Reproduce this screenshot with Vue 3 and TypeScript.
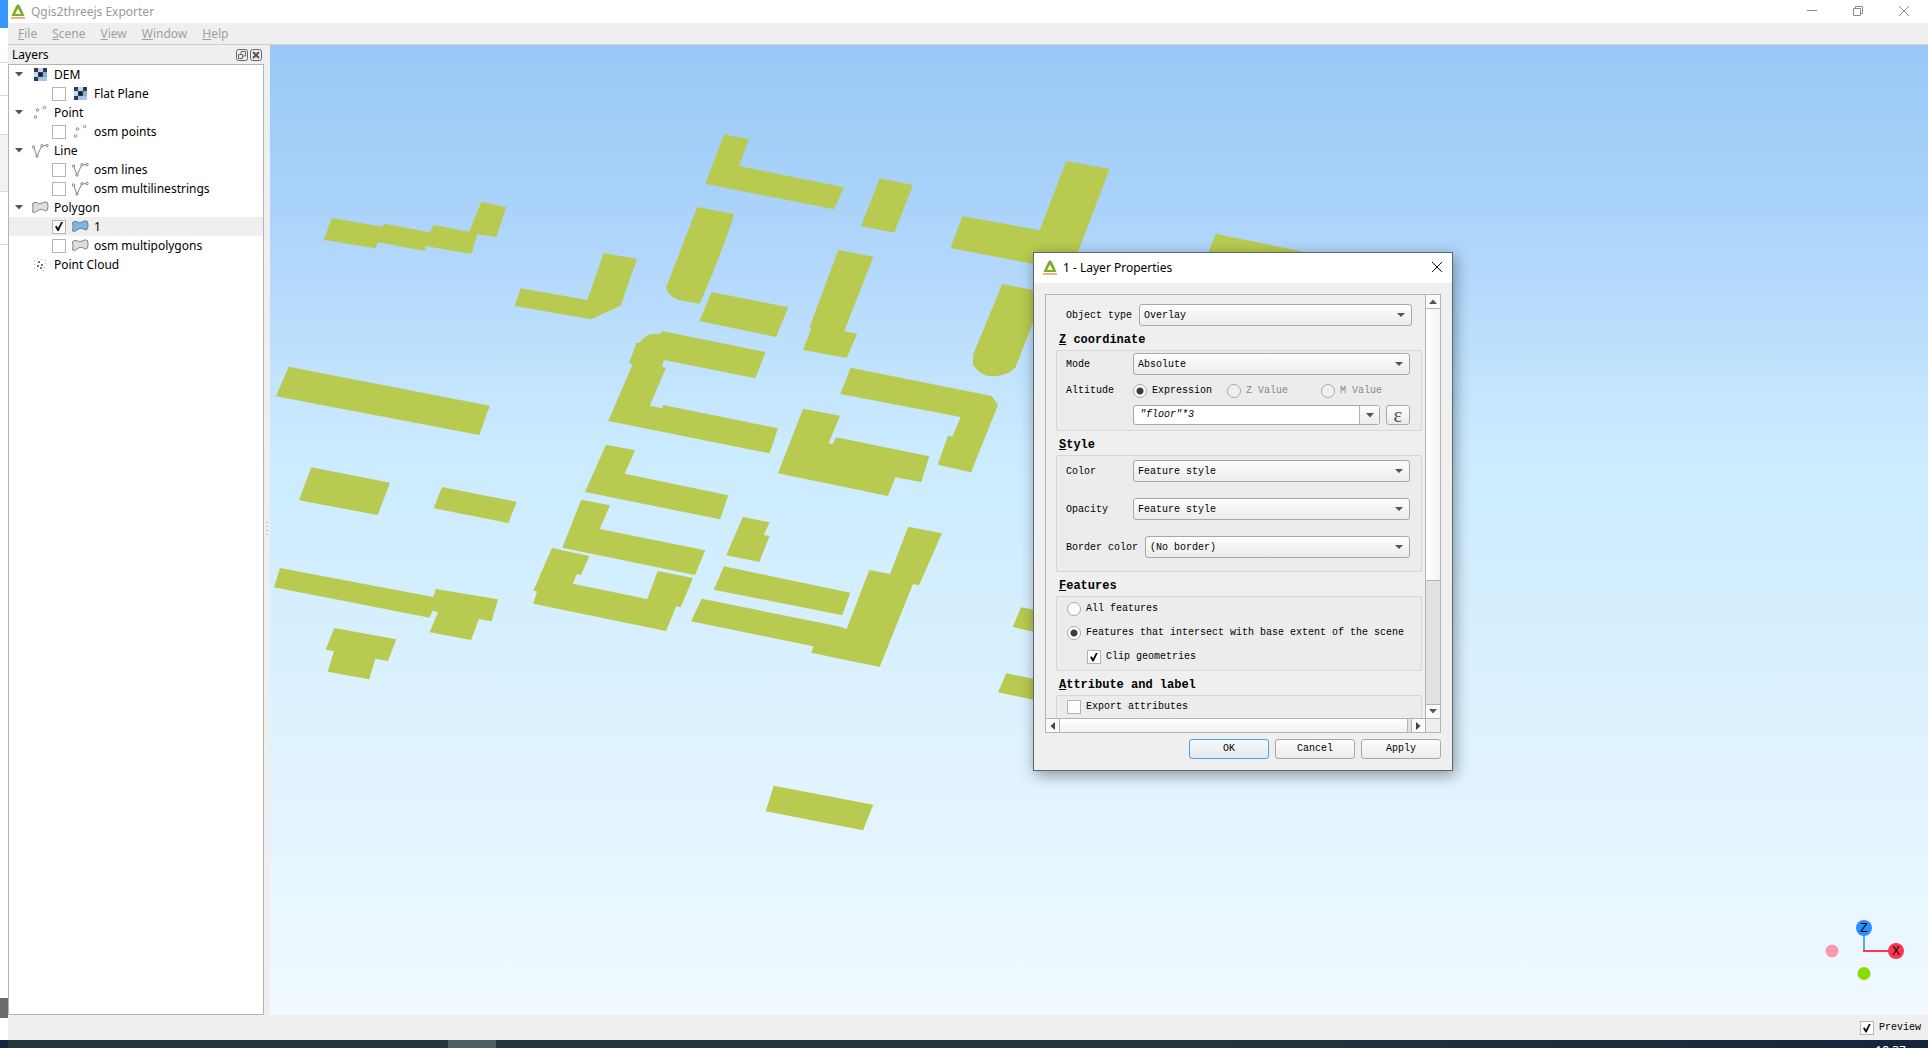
<script setup lang="ts">
import { ref } from 'vue'

type IconKind = 'dem' | 'point' | 'line' | 'polygon' | 'cloud'

interface LayerRow {
  id: string
  label: string
  icon: IconKind
  group: boolean
  expandable?: boolean
  checked?: boolean
  active?: boolean
}

const menus: string[] = ['File', 'Scene', 'View', 'Window', 'Help']

const layers = ref<LayerRow[]>([
  { id: 'dem', label: 'DEM', icon: 'dem', group: true, expandable: true },
  { id: 'flat', label: 'Flat Plane', icon: 'dem', group: false },
  { id: 'point', label: 'Point', icon: 'point', group: true, expandable: true },
  { id: 'osm-points', label: 'osm points', icon: 'point', group: false },
  { id: 'line', label: 'Line', icon: 'line', group: true, expandable: true },
  { id: 'osm-lines', label: 'osm lines', icon: 'line', group: false },
  { id: 'osm-mls', label: 'osm multilinestrings', icon: 'line', group: false },
  { id: 'polygon', label: 'Polygon', icon: 'polygon', group: true, expandable: true },
  { id: 'one', label: '1', icon: 'polygon', group: false, checked: true, active: true },
  { id: 'osm-mp', label: 'osm multipolygons', icon: 'polygon', group: false },
  { id: 'cloud', label: 'Point Cloud', icon: 'cloud', group: true },
])

// Building footprints of the active layer, in scene units
const footprints: string[] = [
  '332,218 382.3,226.7 384.3,223.7 429.7,232.3 433.7,225 469,231.7 481.3,202 506.3,207 496.3,237 477.3,234.3 471.3,254 425.7,246 425.3,251 377.7,242.3 375.7,248.3 323.7,239.7',
  '520.7,288.3 587.3,300 603.7,253 637,259 620.7,305.7 591,319.3 514.7,306',
  '288.7,366.7 489.7,405.7 479.3,435 276,396.3',
  '724,134.3 749,139.3 739,166 844.3,187.3 834,209.3 705.3,183.7',
  '879.7,178.3 913,185 894.3,232.7 861,226',
  '697.3,207 734.3,214 727.3,235 712.7,273.3 699.7,303.7 678.3,300 672.3,296.7 668,292.7 666,287.7',
  '711.7,292 788.3,307.3 776,337 699.3,321',
  '838.3,250 873.3,256.7 844.3,331 857,333.7 846.7,358 803,350 811.3,328.3 809.3,327.7',
  '850.7,367.7 991.7,396 998,405 971,472.3 937.7,464.7 948,435.7 952.3,436.7 960.7,417 840.3,394',
  '1002.3,284 1044,292 1034,320 1015.3,367.7 1008.7,372.7 1001.7,375.3 994,376.3 986.7,375.7 981,373.3 976.7,369.3 973,365.3 973,354.7',
  '962.3,216 1039.7,230.3 1066.3,161 1109.7,169 1077.7,252.7 1071,271 1033.3,264 950.7,248',
  '1215.7,233.7 1300.7,251.3 1299,256 1207,256',
  '662,331 765.7,352 755.3,378.3 664,360 662,366.7 666,367.7 649.7,405.7 662,408.3 663.3,405 778,428.3 769.7,453.3 608.3,421 632.7,364.3 629,363 636.7,342.7 639.3,343 643.3,338.3 648.3,335 653.3,333.7 660,334.3',
  '803,408.7 840,415.7 828.7,443.3 832.7,444.3 836,437.3 929.3,456.3 921.3,482 895.3,477.3 888,496 778,473.3',
  '606,444.7 635,450.3 624.7,473.7 728.3,495.3 720,519.3 585,492',
  '581.3,499.7 610,505.3 599.7,529 705.3,550.3 695,575 562.3,547.7',
  '552,548 589.3,556 581,575 576.7,574.3 572.7,583.7 647.3,599 657.7,571 693,578 680.7,607.3 676.3,606.3 666,631 533.3,603.7 537,591.3 533.3,590.7',
  '742.7,517 769.7,522.3 763.7,535 769.7,536 759.3,562 726.3,555.3',
  '724,566.3 850.3,592.7 842.3,615.3 713.7,589.7',
  '701.7,598.7 838.3,626.3 846.7,629 869.3,570 890,574 908.3,526.7 942,533.3 919,585.3 913,584 879.7,667 811.3,652.7 813.3,646.3 691,621.3',
  '311.3,467.3 390,482.7 377.7,515 299,500.3',
  '442,487 516.7,501.7 508.3,523 433.7,508.3',
  '280,568 433.3,597 435.7,589 498,599.3 491.7,621.3 479,619 471,640 429.7,632.3 438,612 432.3,611 429.7,617.7 274,587.3',
  '334.3,628 396.3,639.3 388,661 375.3,658.7 369.3,679.3 327.7,671.7 334,651.3 325.7,649.7',
  '773.7,785.7 873.3,804.7 863,830.3 765.7,811.3',
  '1021,607.3 1044,612 1044,634 1012.7,627',
  '1006.3,673.3 1044,681 1044,702 998,692.3',
]

const altitude = ref('expression')
const scope = ref('intersect')
const expression = ref('"floor"*3')
const clip = ref(true)
const exportAttributes = ref(false)
const preview = ref(true)
</script>

<template>
  <div class="desktop">
    <div class="body">
      <div class="behind">
        <i class="b-blue"></i><i class="b-cell"></i><i class="b-cell two"></i><i class="b-cell three"></i>
        <i class="b-cell shade"></i><i class="b-cell five"></i><i class="b-fill"></i><i class="b-dark"></i><i class="b-end"></i>
      </div>
      <div class="window">
        <header class="titlebar">
          <svg class="logo" width="14" height="15" viewBox="0 0 14 15">
            <path d="M7 0 9 2 13.500 12H.5L5 2Z" fill="#7fae26" />
            <path d="M7 4.500 9.800 10H4.200Z" fill="#fff" />
            <path d="M0 13h14v1.800H0z" fill="#f5a673" />
          </svg>
          <h1>Qgis2threejs Exporter</h1>
          <div class="winbtns">
            <button aria-label="Minimize"><svg width="12" height="12"><path d="M1 5.500h10" stroke="#8c8c8c" /></svg></button>
            <button aria-label="Restore"><svg width="12" height="12"><path d="M1.500 3.500h7v7h-7zM3.500 3.500v-2h7v7h-2" fill="none" stroke="#8c8c8c" /></svg></button>
            <button aria-label="Close"><svg width="12" height="12"><path d="M1 1l10 10M11 1 1 11" stroke="#8c8c8c" /></svg></button>
          </div>
        </header>
        <nav class="menubar">
          <button v-for="m in menus" :key="m"><u>{{ m[0] }}</u>{{ m.slice(1) }}</button>
        </nav>
        <div class="main">
          <aside class="dock">
            <div class="dock-head">
              <h2>Layers</h2>
              <button aria-label="Float"><svg width="12" height="12"><rect x=".5" y=".5" width="11" height="11" rx="2" fill="none" stroke="#666" /><path d="M2.500 5.500h4v4h-4zM5 5V2.500h4.500V7H7" fill="none" stroke="#666" /></svg></button>
              <button aria-label="Close panel"><svg width="12" height="12"><rect x=".5" y=".5" width="11" height="11" rx="2" fill="none" stroke="#666" /><path d="M3 3l6 6M9 3 3 9" stroke="#555" stroke-width="2" /></svg></button>
            </div>
            <ul class="tree">
              <li v-for="l in layers" :key="l.id" :class="{ child: !l.group, active: l.active }">
                <span class="twist"><svg v-if="l.expandable" width="8" height="5"><path d="M0 0h8L4 4.500z" fill="#555" /></svg></span>
                <input v-if="!l.group" :id="l.id" v-model="l.checked" type="checkbox" class="tick" />
                <svg class="ico" width="18" height="14" viewBox="0 0 18 14">
                  <g v-if="l.icon === 'dem'">
                    <path d="M3 0h13v13H3z" fill="#a9c3e6" />
                    <path d="M3 0h4v4H3zM12 0h4v4h-4zM3 9h4v4H3zM7 4h5v5H7z" fill="#2c3e57" />
                    <path d="M8 5h3v3H8z" fill="#16202e" />
                    <path d="M7 0h5v4H7zM3 4h4v5H3z" fill="#c6d8f0" />
                    <path d="M12 4h4v5h-4z" fill="#8fabd2" />
                  </g>
                  <g v-else-if="l.icon === 'point'" fill="#fff" stroke="#8c8c8c">
                    <circle cx="4.500" cy="11" r="1.300" /><circle cx="6.500" cy="4" r="1.300" /><circle cx="13.500" cy="1.500" r="1.300" />
                  </g>
                  <g v-else-if="l.icon === 'line'" fill="#fff" stroke="#858585">
                    <path d="M2.500 3 6 12 10.500 2.500Q11 1.500 16 1.500" fill="none" />
                    <circle cx="2.500" cy="3" r="1.200" /><circle cx="6" cy="12" r="1.200" /><circle cx="11" cy="1.800" r="1.200" /><circle cx="16" cy="1.500" r="1.200" />
                  </g>
                  <path
                    v-else-if="l.icon === 'polygon'"
                    d="M1.500 2.500Q4 .3 6.500 2T11 2Q14 0 16.500 1.500 17.500 5 16.500 9 14 11 12.500 9 9 7 6 10 3.500 12.500 1.500 11 2.500 7 1.500 2.500Z"
                    :fill="l.active ? '#86b3d9' : '#dedede'"
                    :stroke="l.active ? '#5a86ad' : '#858585'"
                  />
                  <g v-else fill="#777">
                    <path d="M7 3h2v2H7zM10 6h2v2h-2zM6 7h2v2H6zM9 9h2v2H9z" />
                    <path d="M3 2h1v1H3zM10 1h1v1h-1zM14 2h1v1h-1zM3 6h1v1H3zM14 5h1v1h-1zM13 9h1v1h-1zM3 10h1v1H3zM6 12h1v1H6zM12 12h1v1h-1zM6 0h1v1H6z" fill="#aaa" />
                  </g>
                </svg>
                <label v-if="!l.group" :for="l.id">{{ l.label }}</label>
                <span v-else>{{ l.label }}</span>
              </li>
            </ul>
          </aside>
          <div class="splitter"><i></i></div>
          <section class="scene">
            <svg class="buildings" viewBox="270 45 1658 970" preserveAspectRatio="xMinYMin slice">
              <polygon v-for="(p, i) in footprints" :key="i" :points="p" fill="#b9ca50" />
            </svg>
            <svg class="gizmo" width="88" height="70" viewBox="0 0 88 70">
              <path d="M44 12v23" stroke="#5aa5f7" stroke-width="2" />
              <path d="M43 35h33" stroke="#ff3653" stroke-width="2" />
              <circle cx="12" cy="35" r="6.500" fill="#f79aac" />
              <circle cx="44" cy="57.500" r="6.500" fill="#8adb00" />
              <circle cx="44" cy="12" r="8" fill="#2c8fff" />
              <circle cx="76" cy="35" r="8" fill="#ff3653" />
              <text x="44" y="16" text-anchor="middle">Z</text>
              <text x="76" y="39" text-anchor="middle">X</text>
            </svg>

            <form class="dialog" @submit.prevent>
              <header class="dlg-title">
                <svg class="logo" width="14" height="15" viewBox="0 0 14 15">
                  <path d="M7 0 9 2 13.500 12H.5L5 2Z" fill="#7fae26" />
                  <path d="M7 4.500 9.800 10H4.200Z" fill="#fff" />
                  <path d="M0 13h14v1.800H0z" fill="#f5a673" />
                </svg>
                <h2>1 - Layer Properties</h2>
                <button type="button" aria-label="Close dialog"><svg width="12" height="12"><path d="M1 1l10 10M11 1 1 11" stroke="#111" /></svg></button>
              </header>
              <div class="scroll">
                <div class="content">
                  <div class="row top">
                    <label for="otype">Object type</label>
                    <span class="combo"><select id="otype"><option>Overlay</option></select></span>
                  </div>
                  <h3><u>Z</u> coordinate</h3>
                  <fieldset class="zbox">
                    <div class="row">
                      <label for="mode" class="lab">Mode</label>
                      <span class="combo"><select id="mode"><option>Absolute</option></select></span>
                    </div>
                    <div class="row alt">
                      <span class="lab">Altitude</span>
                      <label class="opt wide"><input v-model="altitude" type="radio" value="expression" />Expression</label>
                      <label class="opt wide off"><input v-model="altitude" type="radio" value="z" disabled />Z Value</label>
                      <label class="opt off"><input v-model="altitude" type="radio" value="m" disabled />M Value</label>
                    </div>
                    <div class="row">
                      <span class="lab"></span>
                      <span class="editable">
                        <input v-model="expression" type="text" aria-label="Altitude expression" />
                        <button type="button" aria-label="Recent expressions"><svg width="8" height="5"><path d="M0 0h8L4 4.500z" fill="#555" /></svg></button>
                      </span>
                      <button type="button" class="eps" aria-label="Expression dialog">ε</button>
                    </div>
                  </fieldset>
                  <h3><u>S</u>tyle</h3>
                  <fieldset class="sbox">
                    <div class="row">
                      <label for="color" class="lab">Color</label>
                      <span class="combo"><select id="color"><option>Feature style</option></select></span>
                    </div>
                    <div class="row">
                      <label for="opacity" class="lab">Opacity</label>
                      <span class="combo"><select id="opacity"><option>Feature style</option></select></span>
                    </div>
                    <div class="row">
                      <label for="border" class="lab long">Border color</label>
                      <span class="combo"><select id="border"><option>(No border)</option></select></span>
                    </div>
                  </fieldset>
                  <h3><u>F</u>eatures</h3>
                  <fieldset class="fbox">
                    <label class="opt"><input v-model="scope" type="radio" value="all" />All features</label>
                    <label class="opt"><input v-model="scope" type="radio" value="intersect" />Features that intersect with base extent of the scene</label>
                    <label class="opt sub"><input v-model="clip" type="checkbox" class="tick" />Clip geometries</label>
                  </fieldset>
                  <h3><u>A</u>ttribute and label</h3>
                  <fieldset class="abox">
                    <label class="opt box"><input v-model="exportAttributes" type="checkbox" class="tick" />Export attributes</label>
                  </fieldset>
                </div>
                <div class="vbar">
                  <button type="button" aria-label="Scroll up"><svg width="8" height="5"><path d="M0 5h8L4 .5z" fill="#555" /></svg></button>
                  <i class="thumb"></i><i class="track"></i>
                  <button type="button" aria-label="Scroll down"><svg width="8" height="5"><path d="M0 0h8L4 4.500z" fill="#555" /></svg></button>
                </div>
                <div class="hbar">
                  <button type="button" aria-label="Scroll left"><svg width="5" height="8"><path d="M5 0v8L.5 4z" fill="#444" /></svg></button>
                  <i class="thumb"></i><i class="track"></i>
                  <button type="button" aria-label="Scroll right"><svg width="5" height="8"><path d="M0 0v8l4.500-4z" fill="#444" /></svg></button>
                </div>
                <div class="corner"></div>
              </div>
              <footer class="actions">
                <button type="submit" class="default">OK</button>
                <button type="button">Cancel</button>
                <button type="button">Apply</button>
              </footer>
            </form>
          </section>
        </div>
        <footer class="statusbar">
          <label class="opt"><input v-model="preview" type="checkbox" class="tick" />Preview</label>
        </footer>
      </div>
    </div>
    <div class="taskbar">
      <i class="start"></i><i class="task"></i>
      <time>18:37</time>
    </div>
  </div>
</template>

<style>
body {
  margin: 0;
  overflow: hidden;
}
</style>

<style scoped>
* {
  box-sizing: border-box;
}
.desktop {
  display: flex;
  flex-direction: column;
  height: 100vh;
  font: 12px/19px "Noto Sans", "Open Sans", sans-serif;
  color: #000;
}
h1, h2, h3, ul, fieldset {
  margin: 0;
  padding: 0;
  font-size: inherit;
  font-weight: normal;
}
button {
  padding: 0;
  border: 0;
  background: none;
  font: inherit;
  color: inherit;
}
svg {
  display: block;
  flex: none;
}
.body {
  flex: 1;
  min-height: 0;
  display: flex;
}
.behind {
  width: 8px;
  display: flex;
  flex-direction: column;
  background: #fff;
}
.b-blue { height: 28px; background: #3897ff; }
.b-cell { height: 35px; border-bottom: 1px solid #dcdcdc; }
.b-cell.two { height: 33px; }
.b-cell.three { height: 39px; }
.b-cell.shade { height: 57px; background: #f2f2f2; }
.b-cell.five { height: 53px; }
.b-fill { flex: 1; }
.b-dark { height: 20px; background: #6b6b6b; }
.b-end { height: 22px; }
.window {
  flex: 1;
  min-width: 0;
  display: flex;
  flex-direction: column;
  background: #efefef;
}
.titlebar {
  height: 23px;
  display: flex;
  align-items: center;
  padding-left: 3px;
  background: #fff;
  color: #999;
}
.titlebar h1 {
  flex: 1;
  margin-left: 6px;
}
.winbtns {
  display: flex;
  padding: 0 1px 2px 0;
}
.winbtns button {
  width: 46px;
  display: grid;
  place-items: center;
}
.menubar {
  height: 22px;
  display: flex;
  align-items: center;
  gap: 15px;
  padding-left: 10px;
  border-bottom: 1px solid #d0d0d0;
  color: #a0a0a0;
}
.main {
  flex: 1;
  min-height: 0;
  display: flex;
}
.dock {
  width: 256px;
  display: flex;
  flex-direction: column;
}
.dock-head {
  height: 19px;
  display: flex;
  align-items: center;
  gap: 2px;
  padding: 0 2px 0 4px;
}
.dock-head h2 {
  flex: 1;
}
.tree {
  flex: 1;
  border: 1px solid #b4b4b4;
  background: #fff;
  list-style: none;
}
.tree li {
  height: 19px;
  display: flex;
  align-items: center;
}
.tree li.active {
  background: #efefef;
}
.twist {
  width: 22px;
  padding-left: 6px;
}
.child .twist {
  width: 43px;
}
.child .ico {
  margin-left: 5px;
}
.ico {
  margin-right: 5px;
}
.tick {
  appearance: none;
  width: 14px;
  height: 14px;
  margin: 0;
  flex: none;
  display: grid;
  place-items: center;
  border: 1px solid #b4b4b4;
  background: #fff;
}
.tick:checked::after {
  content: "";
  width: 8px;
  height: 9px;
  background: #111;
  clip-path: polygon(0 50%, 20% 42%, 38% 66%, 76% 0, 100% 0, 46% 100%, 30% 100%);
}
.splitter {
  width: 6px;
  display: grid;
  place-items: center;
}
.splitter i {
  width: 2px;
  height: 16px;
  background: repeating-linear-gradient(#bbb 0 1px, transparent 1px 4px);
}
.scene {
  position: relative;
  flex: 1;
  min-width: 0;
  background: linear-gradient(#98c8f6, #b0d6fb 21%, #cbebff 42%, #f0f9ff);
}
.buildings {
  width: 100%;
  height: 100%;
}
.gizmo {
  position: absolute;
  right: 20px;
  bottom: 29px;
  font: 12px "Liberation Sans", sans-serif;
}
.statusbar {
  height: 25px;
  display: flex;
  align-items: center;
  justify-content: flex-end;
  padding: 0 7px 0 0;
  font: 10px/14px "Liberation Mono", monospace;
}
.taskbar {
  height: 8px;
  display: flex;
  overflow: hidden;
  background: linear-gradient(90deg, #22383e 60%, #16243c);
}
.start {
  width: 8px;
  background: #18243f;
}
.task {
  width: 48px;
  margin-left: 440px;
  background: #4b5f65;
}
.taskbar time {
  margin: 3px 22px 0 auto;
  color: #fff;
  line-height: 16px;
}

/* Properties dialog */
.dialog {
  position: absolute;
  left: 763px;
  top: 207px;
  width: 420px;
  display: flex;
  flex-direction: column;
  border: 1px solid #5c666e;
  background: #efefef;
  box-shadow: 2px 4px 14px rgba(0, 0, 0, 0.4);
  font: 10px/14px "Liberation Mono", monospace;
}
.dlg-title {
  height: 30px;
  display: flex;
  align-items: center;
  padding: 0 9px 2px;
  background: #fff;
  font: 12px/19px "Noto Sans", "Open Sans", sans-serif;
}
.dlg-title h2 {
  flex: 1;
  margin-left: 6px;
}
.scroll {
  margin: 11px 11px 0;
  height: 439px;
  display: grid;
  grid-template: minmax(0, 1fr) 14px / minmax(0, 1fr) 15px;
  border: 1px solid #b4b4b4;
}
.content {
  overflow: hidden;
  padding: 9px 3px 0 10px;
}
.row {
  display: flex;
  align-items: center;
}
.top {
  padding: 0 10px;
  gap: 7px;
}
.row label,
.row .lab,
.opt {
  padding-top: 1px;
}
.combo {
  position: relative;
  flex: 1;
  display: flex;
}
.combo::after {
  content: "";
  position: absolute;
  right: 7px;
  top: 9px;
  border: 4px solid transparent;
  border-top-color: #555;
  border-bottom: 0;
}
select {
  appearance: none;
  width: 100%;
  height: 22px;
  padding: 1px 4px 0;
  border: 1px solid #a8a8a8;
  border-radius: 3px;
  background: linear-gradient(#fdfdfd, #ececec);
  font: inherit;
  color: inherit;
}
h3 {
  height: 24px;
  padding: 0 3px;
  font-size: 12px;
  font-weight: bold;
  line-height: 28px;
}
fieldset {
  min-width: 0;
  border: 1px solid #d6d6d6;
  border-radius: 2px;
  background: #ececec;
  padding: 0 11px 0 9px;
}
.lab {
  width: 67px;
}
.lab.long {
  width: 79px;
}
.zbox {
  height: 81px;
  padding-top: 2px;
}
.alt {
  height: 30px;
}
.opt {
  display: flex;
  align-items: center;
  gap: 5px;
}
.opt.wide {
  width: 94px;
}
.opt.off {
  color: #888;
}
.opt input[type="radio"] {
  appearance: none;
  width: 14px;
  height: 14px;
  margin: 0;
  flex: none;
  border: 1px solid #a8a8a8;
  border-radius: 50%;
  background: #fff;
}
.opt input[type="radio"]:disabled {
  background: #f0f0f0;
}
.opt input[type="radio"]:checked {
  background: radial-gradient(circle, #3c3c3c 3px, #fff 4px);
}
.editable {
  flex: 1;
  display: flex;
  height: 20px;
  margin-right: 6px;
  border: 1px solid #a8a8a8;
  border-radius: 3px;
  background: #fff;
}
.editable input {
  flex: 1;
  min-width: 0;
  border: 0;
  padding: 0 6px;
  background: none;
  font: italic 10px/14px "Liberation Mono", monospace;
}
.editable button {
  width: 20px;
  display: grid;
  place-items: center;
  border-left: 1px solid #b4b4b4;
  background: linear-gradient(#fdfdfd, #ececec);
}
.eps {
  width: 24px;
  height: 20px;
  border: 1px solid #a8a8a8;
  border-radius: 3px;
  background: linear-gradient(#fdfdfd, #ececec);
  color: #6b4675;
  font: 21px/12px "Liberation Serif", serif;
}
.sbox {
  height: 117px;
  padding-top: 4px;
  display: flex;
  flex-direction: column;
  gap: 16px;
}
.fbox {
  height: 75px;
  display: flex;
  flex-direction: column;
  padding-left: 10px;
}
.fbox .opt {
  height: 24px;
  padding-top: 0;
}
.fbox .sub {
  padding-left: 20px;
}
.abox {
  height: 80px;
  padding: 3px 10px;
}
.vbar {
  display: flex;
  flex-direction: column;
  border-left: 1px solid #b4b4b4;
}
.vbar button,
.hbar button {
  flex: none;
  display: grid;
  place-items: center;
  background: #fafafa;
}
.vbar button {
  height: 13px;
}
.vbar .thumb {
  height: 273px;
  border: solid #b4b4b4;
  border-width: 1px 0;
  background: linear-gradient(90deg, #fff, #f2f2f2);
}
.track {
  flex: 1;
  background: #e2e2e2;
}
.vbar .track {
  border-bottom: 1px solid #b4b4b4;
}
.hbar {
  display: flex;
  border-top: 1px solid #b4b4b4;
}
.hbar button {
  width: 13px;
}
.hbar .thumb {
  width: 349px;
  border: solid #b4b4b4;
  border-width: 0 1px;
  background: linear-gradient(#fff, #f2f2f2);
}
.hbar .track {
  border-right: 1px solid #b4b4b4;
}
.corner {
  border: solid #b4b4b4;
  border-width: 1px 0 0 1px;
}
.actions {
  display: flex;
  justify-content: flex-end;
  gap: 6px;
  padding: 6px 11px 11px;
}
.actions button {
  width: 80px;
  height: 20px;
  border: 1px solid #a8a8a8;
  border-radius: 3px;
  background: linear-gradient(#fdfdfd, #ececec);
}
.actions .default {
  border-color: #45a5f5;
  background: linear-gradient(#f8fafc, #e4e9ee);
}
</style>
